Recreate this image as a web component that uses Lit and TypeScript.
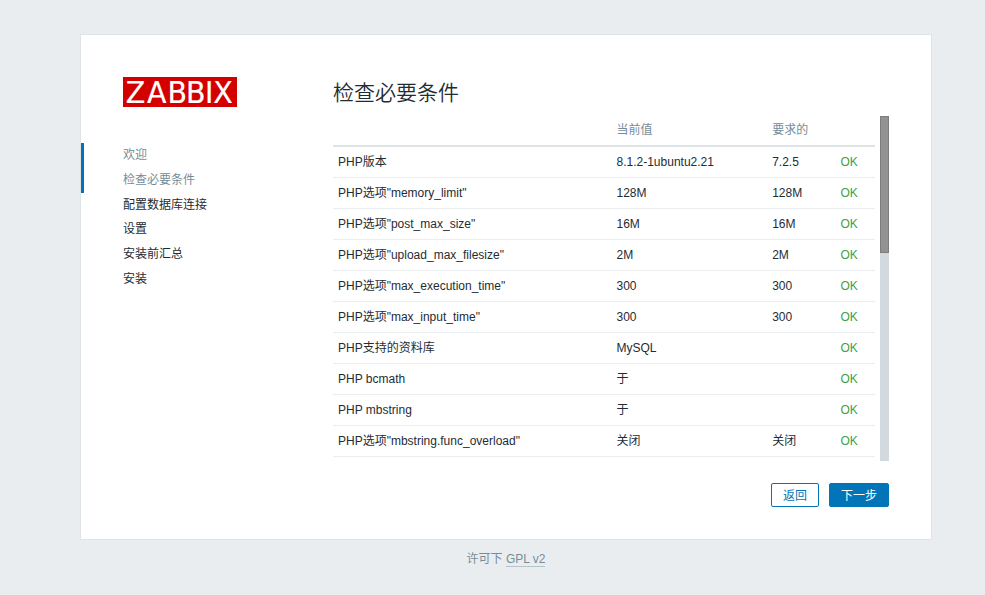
import { LitElement, html, css, svg } from "lit";
import { customElement } from "lit/decorators.js";
import { classMap } from "lit/directives/class-map.js";

const STEPS = [
  { label: "欢迎", done: true },
  { label: "检查必要条件", done: true },
  { label: "配置数据库连接", done: false },
  { label: "设置", done: false },
  { label: "安装前汇总", done: false },
  { label: "安装", done: false },
];

const CHECKS: [string, string, string][] = [
  ["PHP版本", "8.1.2-1ubuntu2.21", "7.2.5"],
  ['PHP选项"memory_limit"', "128M", "128M"],
  ['PHP选项"post_max_size"', "16M", "16M"],
  ['PHP选项"upload_max_filesize"', "2M", "2M"],
  ['PHP选项"max_execution_time"', "300", "300"],
  ['PHP选项"max_input_time"', "300", "300"],
  ["PHP支持的资料库", "MySQL", ""],
  ["PHP bcmath", "于", ""],
  ["PHP mbstring", "于", ""],
  ['PHP选项"mbstring.func_overload"', "关闭", "关闭"],
];

@customElement("app-root")
export class AppRoot extends LitElement {
  static styles = css`
    :host {
      display: flex;
      flex-direction: column;
      box-sizing: border-box;
      height: 595px;
      width: 985px;
      padding: 34px 0 0 80px;
      background: #e9edf0;
      color: #1f2c33;
      font: 12px/18px "Liberation Sans", "Noto Sans CJK SC", sans-serif;
      overflow: hidden;
    }
    .card {
      box-sizing: border-box;
      width: 852px;
      height: 506px;
      display: flex;
      background: #fff;
      border: 1px solid #dfe4e7;
    }
    .side {
      width: 252px;
      padding-top: 42px;
    }
    .logo {
      display: block;
      margin-left: 42px;
      overflow: visible;
    }
    .logo text {
      font-family: "DejaVu Sans", sans-serif;
      font-size: 30px;
      fill: #fff;
      stroke: #fff;
      stroke-width: 0.2px;
    }
    .steps {
      list-style: none;
      margin: 36px 0 0;
      padding: 0;
    }
    .step {
      height: 24.8px;
      line-height: 24.8px;
      padding-left: 39px;
      border-left: 3px solid transparent;
    }
    .step.done {
      border-left-color: #0275b8;
      color: #768d99;
    }
    .main {
      width: 556px;
      padding-top: 42px;
    }
    h1 {
      margin: 0;
      height: 39px;
      font-size: 21px;
      line-height: 32px;
      font-weight: 350;
    }
    .scroller {
      display: flex;
      justify-content: space-between;
      height: 345px;
    }
    .table {
      width: 542px;
    }
    .row {
      box-sizing: border-box;
      height: 31px;
      display: grid;
      grid-template-columns: 278.5px 155.7px 68.3px 1fr;
      align-items: center;
      padding-left: 5px;
      border-bottom: 1px solid #ebeef0;
      white-space: nowrap;
    }
    .row.head {
      padding-bottom: 1px;
      border-bottom: 2px solid #dfe4e7;
      color: #768d99;
    }
    .ok {
      color: #429e47;
    }
    .track {
      width: 9px;
      background: #d2d9df;
    }
    .thumb {
      box-sizing: border-box;
      height: 137px;
      background: #929293;
      border: 1px solid #7d7d7e;
    }
    .actions {
      display: flex;
      justify-content: flex-end;
      gap: 10px;
      margin-top: 22px;
    }
    button {
      box-sizing: border-box;
      height: 24px;
      padding: 2px 11px 0;
      border: 1px solid #0275b8;
      border-radius: 2px;
      background: #fff;
      color: #0275b8;
      font: inherit;
      line-height: 20px;
    }
    button.primary {
      background: #0275b8;
      color: #fff;
    }
    .footer {
      width: 852px;
      margin-top: 10px;
      text-align: center;
      color: #768d99;
    }
    .link {
      display: inline-block;
      height: 16px;
      border-bottom: 1px solid #b7c3ca;
    }
  `;

  private logo() {
    return html`<svg class="logo" width="114" height="30" viewBox="0 0 114 30">
      ${svg`<rect width="114" height="30" fill="#d40000"></rect>
      <text transform="scale(.95 1)" x="2.9 25.2 46.8 66.2 86.4 94.9" y="26">ZABBIX</text>`}
    </svg>`;
  }

  render() {
    return html`
      <div class="card">
        <div class="side">
          ${this.logo()}
          <ul class="steps">
            ${STEPS.map(
              (s) => html`<li class=${classMap({ step: true, done: s.done })}>${s.label}</li>`
            )}
          </ul>
        </div>
        <div class="main">
          <h1>检查必要条件</h1>
          <div class="scroller">
            <div class="table">
              <div class="row head"><span></span><span>当前值</span><span>要求的</span><span></span></div>
              ${CHECKS.map(
                ([name, current, required]) => html`<div class="row">
                  <span>${name}</span><span>${current}</span><span>${required}</span><span class="ok">OK</span>
                </div>`
              )}
            </div>
            <div class="track"><div class="thumb"></div></div>
          </div>
          <div class="actions">
            <button>返回</button>
            <button class="primary">下一步</button>
          </div>
        </div>
      </div>
      <div class="footer">许可下 <span class="link">GPL v2</span></div>
    `;
  }
}
